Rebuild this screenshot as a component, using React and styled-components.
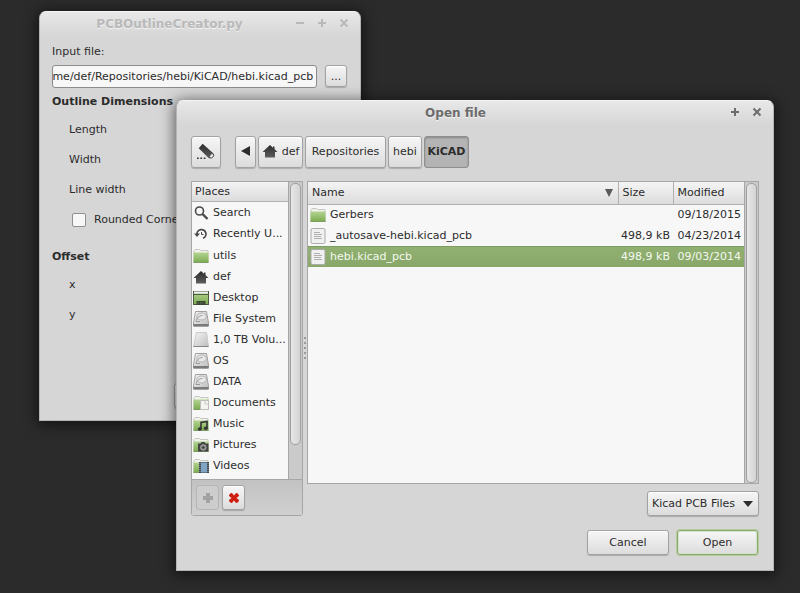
import React, { useEffect, useRef, useState } from 'react';
import styled, { createGlobalStyle, css } from 'styled-components';

const GlobalStyle = createGlobalStyle`
  * {
    box-sizing: border-box;
  }

  body {
    margin: 0;
    background: #2b2b2b;
    color: #2c2c2c;
    font-family: "DejaVu Sans", sans-serif;
    font-size: 11px;
    line-height: 15px;
  }

  button, input, select {
    font: inherit;
    color: inherit;
    margin: 0;
  }

  svg {
    flex: none;
  }
`;

const Desktop = styled.main`
  position: relative;
  min-height: 100vh;
  overflow: hidden;
`;

const Window = styled.section`
  position: absolute;
  display: flex;
  flex-direction: column;
  background: #d6d6d6;
  border: 1px solid #b4b4b4;
  border-top-color: #f4f4f4;
  border-radius: 7px 7px 0 0;
  box-shadow: 0 2px 14px 2px rgba(0, 0, 0, 0.55);
`;

const ScriptWindow = styled(Window)`
  left: 39px;
  top: 11px;
  width: 322px;
  min-height: 410px;
`;

const DialogWindow = styled(Window)`
  left: 176px;
  top: 100px;
  width: 598px;
`;

const TitleBar = styled.header`
  display: flex;
  align-items: center;
  height: 24px;
  padding-right: 9px;
  gap: 8px;
  border-radius: 6px 6px 0 0;
  background: linear-gradient(#e8e8e8, #d6d6d6);
  color: ${(p) => (p.$active ? '#6c6c6c' : '#b9b9b9')};
`;

const Title = styled.h1`
  flex: 1;
  margin: 0;
  padding-left: 14px;
  font-size: 12px;
  font-weight: bold;
  text-align: center;
  text-shadow: 0 1px 0 #f2f2f2;
`;

const WindowButton = styled.button`
  display: flex;
  align-items: center;
  justify-content: center;
  width: 14px;
  height: 14px;
  padding: 0;
  border: 0;
  background: none;
`;

const raised = css`
  border: 1px solid #a2a2a2;
  border-radius: 3px;
  background: linear-gradient(#f6f6f6, #dcdcdc);
  box-shadow: inset 0 1px 0 #fff, 0 1px 1px rgba(0, 0, 0, 0.2);
`;

const Button = styled.button`
  ${raised}
  display: flex;
  align-items: center;
  justify-content: center;
  height: 25px;
  padding: 0;
  width: ${(p) => p.$width};

  &:disabled {
    background: #cdcdcd;
    border-color: #b5b5b5;
    box-shadow: none;
  }
`;

const DefaultButton = styled(Button)`
  border-color: #8ba870;
  box-shadow: 0 0 0 1px #b4cd9b, inset 0 0 0 1px #d5e3c8;
`;

const Form = styled.form`
  display: flex;
  flex: 1;
  flex-direction: column;
  padding: 8px 13px 12px 12px;
`;

const FileRow = styled.div`
  display: flex;
  gap: 8px;
  margin-top: 6px;
`;

const PathInput = styled.input`
  flex: 1;
  min-width: 0;
  height: 23px;
  padding: 0 3px 0 0;
  border: 1px solid #8c8c8c;
  border-radius: 3px;
  background: #f7f7f7;
`;

const BrowseButton = styled(Button)`
  height: 22px;
`;

const Group = styled.fieldset`
  display: flex;
  flex-direction: column;
  gap: 15px;
  min-width: 0;
  margin: 0 0 16px;
  padding: 0 0 0 17px;
  border: 0;
`;

const GroupTitle = styled.legend`
  margin-left: -17px;
  padding: 6px 0 13px;
  font-weight: bold;
`;

const CheckLabel = styled.label`
  display: flex;
  align-items: center;
  gap: 8px;
  padding-left: 3px;
`;

const Check = styled.input`
  appearance: none;
  width: 14px;
  height: 14px;
  border: 1px solid #8f8f8f;
  border-radius: 2px;
  background: #f7f7f7;
`;

const FormActions = styled.div`
  display: flex;
  justify-content: flex-end;
  margin-top: auto;
`;

const DialogBody = styled.div`
  display: flex;
  flex-direction: column;
  padding: 11px 14px 15px;
`;

const PathBar = styled.nav`
  display: flex;
  gap: 2px;
  margin-bottom: 13px;
`;

const PathButton = styled(Button)`
  height: 32px;
  gap: 4px;
  padding: 0 0 2px;

  ${(p) => p.$current && css`
    background: #b4b4b4;
    border-color: #8e8e8e;
    box-shadow: inset 0 1px 2px rgba(0, 0, 0, 0.25);
    font-weight: bold;
  `}
`;

const TypeNameButton = styled(PathButton)`
  margin-right: 12px;
`;

const Panes = styled.div`
  display: flex;
`;

const Sidebar = styled.aside`
  display: flex;
  flex-direction: column;
  width: 112px;
  height: 335px;
  border: 1px solid #a6a6a6;
  border-radius: 0 0 3px 3px;
`;

const ScrollArea = styled.div`
  display: flex;
  flex: 1;
  min-height: 0;
  background: #f7f7f7;
`;

const Pane = styled.div`
  flex: 1;
  min-width: 0;
  overflow: hidden;
`;

const Track = styled.div`
  display: flex;
  width: 14px;
  padding: 1px 1px 0;
  border-left: 1px solid #a6a6a6;
  background: #cacaca;
`;

const Thumb = styled.div`
  flex: 1;
  height: ${(p) => p.$size};
  border: 1px solid #a0a0a0;
  border-radius: 5px;
  background: linear-gradient(90deg, #e6e6e6, #d4d4d4);
`;

const PlacesTitle = styled.h2`
  height: 20px;
  margin: 0;
  padding: 2px 3px;
  border-bottom: 1px solid #b0b0b0;
  background: linear-gradient(#f4f4f4, #dcdcdc);
  font-size: 11px;
  font-weight: normal;
`;

const PlaceList = styled.ul`
  margin: 0;
  padding: 0;
  list-style: none;

  &:first-of-type {
    margin-bottom: 1px;
  }
`;

const Place = styled.button`
  display: flex;
  align-items: center;
  gap: 4px;
  width: 100%;
  height: 21px;
  padding: 0 0 0 1px;
  border: 0;
  background: none;
  text-align: left;
  white-space: nowrap;
`;

const PlaceActions = styled.div`
  display: flex;
  gap: 3px;
  height: 36px;
  padding: 5px 4px;
  border-top: 1px solid #a6a6a6;
  background: linear-gradient(#c2c2c2, #d0d0d0);
`;

const Handle = styled.div`
  display: flex;
  align-items: center;
  justify-content: center;
  width: 4px;
`;

const FileArea = styled(ScrollArea)`
  height: 303px;
  border: 1px solid #a6a6a6;
`;

const FileTable = styled.table`
  width: 100%;
  table-layout: fixed;
  border-collapse: collapse;
`;

const Column = styled.col`
  width: ${(p) => p.$width};
`;

const HeadCell = styled.th`
  height: 22px;
  padding: 0 4px;
  border-bottom: 1px solid #b0b0b0;
  background: linear-gradient(#f4f4f4, #dcdcdc);
  font-weight: normal;
  text-align: left;

  & + & {
    border-left: 1px solid #b0b0b0;
  }
`;

const HeadContent = styled.span`
  display: flex;
  align-items: center;
  justify-content: space-between;
`;

const FileLine = styled.tr`
  height: 21px;

  ${(p) => p.$selected && css`
    background: linear-gradient(#91b171, #88a769);
    color: #f4f8ef;
    box-shadow: inset 0 1px 0 #7f9c63;
  `}
`;

const Cell = styled.td`
  padding: 0 3px 0 2px;
  text-align: ${(p) => (p.$number ? 'right' : 'left')};
  white-space: nowrap;
`;

const FileName = styled.span`
  display: flex;
  align-items: center;
  gap: 4px;
`;

const FilterRow = styled.div`
  display: flex;
  justify-content: flex-end;
  margin-top: -25px;
`;

const SelectBox = styled.label`
  ${raised}
  display: flex;
  align-items: center;
  width: 112px;
  height: 25px;
  padding-right: 5px;
`;

const Select = styled.select`
  appearance: none;
  flex: 1;
  min-width: 0;
  padding: 0 0 0 4px;
  border: 0;
  background: none;
`;

const DialogActions = styled.footer`
  display: flex;
  justify-content: flex-end;
  gap: 8px;
  padding: 14px 1px 0 0;
`;

const glyphs = {
  minimize: 'M2 5h8',
  maximize: 'M2 5h8M6 1v8',
  close: 'M2.500 1.500l7 7M9.500 1.500l-7 7',
};

const ControlGlyph = ({ kind }) => (
  <svg width="12" height="12" viewBox="0 0 12 12" fill="none" stroke="currentColor" strokeWidth="2">
    <path d={glyphs[kind]} />
  </svg>
);

const Triangle = ({ d, color = '#2c2c2c' }) => (
  <svg width="10" height="10" viewBox="0 0 10 10">
    <path d={d} fill={color} />
  </svg>
);

const Gradients = () => (
  <svg width="0" height="0" display="block" aria-hidden="true">
    <defs>
      <linearGradient id="folder" x1="0" y1="0" x2="0" y2="1">
        <stop offset="0" stopColor="#b3d492" />
        <stop offset="1" stopColor="#7cab50" />
      </linearGradient>
      <linearGradient id="metal" x1="0" y1="0" x2="1" y2="1">
        <stop offset="0" stopColor="#f6f6f6" />
        <stop offset="1" stopColor="#bdbdbd" />
      </linearGradient>
      <linearGradient id="roof" x1="0" y1="0" x2="0" y2="1">
        <stop offset="0" stopColor="#2c2c2c" />
        <stop offset="1" stopColor="#5c5c5c" />
      </linearGradient>
    </defs>
  </svg>
);

const Folder = ({ children }) => (
  <>
    <path d="M1 14.500V2.500L2 1.500h4.500l1 1H15v12z" fill="#f1f1ec" stroke="#c4c8bf" />
    <rect x="0.500" y="4.500" width="15" height="10" fill="url(#folder)" />
    <path d="M0.500 14.500h15" stroke="#7d9c62" />
    {children}
  </>
);

const iconShapes = {
  home: <path d="M8 2L0.500 9H3v5.500h10V9h2.500L12.500 6V3.500h-1.500v1.200z" fill="url(#roof)" />,
  search: (
    <>
      <circle cx="6.500" cy="6" r="4" fill="none" stroke="#4a4a4a" strokeWidth="1.600" />
      <path d="M9.500 9l5 5" stroke="#4a4a4a" strokeWidth="2.400" />
    </>
  ),
  recent: (
    <>
      <path d="M4 8.500A4.500 4.500 0 1 1 10 12.300" fill="none" stroke="#4a4a4a" strokeWidth="1.700" />
      <path d="M1 7.500h6l-3 3.500z" fill="#4a4a4a" />
      <path d="M8.500 6V8.500h2" fill="none" stroke="#4a4a4a" />
    </>
  ),
  folder: <Folder />,
  desktop: (
    <>
      <rect x="0.500" y="1.500" width="15" height="13" fill="url(#folder)" stroke="#4d5a42" />
      <path d="M1 2.500h14" stroke="#f0f0f0" strokeWidth="2" />
      <path d="M1 4.500h14" stroke="#4d5a42" />
      <path d="M3.500 11h9v4h-9z" fill="#3c4634" />
      <path d="M5 13h6" stroke="#71815f" strokeDasharray="1 1" />
    </>
  ),
  drive: (
    <>
      <path d="M2.500 0.500h11l2 11.500v3H0.500v-3z" fill="url(#metal)" stroke="#a0a0a0" />
      <ellipse cx="8.500" cy="5.500" rx="4.800" ry="3.500" fill="#e9e9e9" stroke="#b0b0b0" />
      <path d="M9.500 4.500C6 4.500 3.500 7 3 10.500h4" fill="none" stroke="#999" />
      <path d="M0.500 13h15v2.500h-15z" fill="#7b7b7b" />
    </>
  ),
  volume: (
    <>
      <path d="M3.500 0.500h10l2 14H0.500z" fill="url(#metal)" stroke="#c9c9c9" />
      <path d="M0.500 14.500h15" stroke="#858585" />
    </>
  ),
  documents: (
    <Folder>
      <path d="M7.500 5.500h8v9h-8z" fill="#f4f4f1" stroke="#bdbdb9" />
      <path d="M12 6v3h3" fill="none" stroke="#c9c9c4" />
    </Folder>
  ),
  music: (
    <Folder>
      <path d="M8 13V6.500l6-1V12" fill="none" stroke="#333" strokeWidth="1.600" />
      <ellipse cx="6.800" cy="13" rx="2" ry="1.700" fill="#333" />
      <ellipse cx="12.800" cy="12.300" rx="2" ry="1.700" fill="#333" />
    </Folder>
  ),
  pictures: (
    <Folder>
      <path d="M5 6.500h2.500l1-1.500h3l1 1.500H15.500v8H5z" fill="#454545" />
      <circle cx="10.300" cy="10.500" r="2.700" fill="#777" stroke="#b5b5b5" />
      <circle cx="10.300" cy="10.500" r="1.100" fill="#333" />
    </Folder>
  ),
  videos: (
    <Folder>
      <rect x="6" y="4" width="10" height="11" fill="#3f4a55" />
      <rect x="8" y="4.500" width="6" height="10" fill="#7fa4c4" />
      <path d="M7 5v10M15 5v10" stroke="#9aa5ad" strokeDasharray="1 1" />
    </Folder>
  ),
  file: (
    <>
      <rect x="1" y="0.500" width="14" height="15" rx="1.500" fill="#f0f0f0" stroke="#ababab" />
      <path d="M4 4.500h6M4 6.500h8M4 8.500h7M4 10.500h8" stroke="#b0b0b0" />
    </>
  ),
  pencil: (
    <>
      <path d="M5 1.500L14.500 10v3L12 14.500h-1.500L1.500 5.500z" fill="url(#roof)" />
      <ellipse cx="13" cy="12.300" rx="1.500" ry="2.200" transform="rotate(42 13 12.300)" fill="#efefef" stroke="#444" strokeWidth="0.800" />
      <path d="M0 14.500h1.500M3 14.500h1.500M6 14.500h1.500" stroke="#333" strokeWidth="1.300" />
    </>
  ),
  add: <path d="M6 3h4v3h3v4h-3v3H6v-3H3V6h3z" fill="#a2a2a2" />,
  remove: (
    <path d="M3 5l2-2h1l2 2.500L10 3h1l2 2v1l-2.500 2L13 10v1l-2 2h-1l-2-2.500L6 13H5l-2-2v-1l2.500-2L3 6z" fill="#cf1f12" />
  ),
};

const Icon = ({ name, size = 16 }) => (
  <svg width={size} height={size} viewBox="0 0 16 16" aria-hidden="true">
    {iconShapes[name]}
  </svg>
);

const placeGroups = [
  [
    ['search', 'Search'],
    ['recent', 'Recently U...'],
  ],
  [
    ['folder', 'utils'],
    ['home', 'def'],
    ['desktop', 'Desktop'],
    ['drive', 'File System'],
    ['volume', '1,0 TB Volu...'],
    ['drive', 'OS'],
    ['drive', 'DATA'],
  ],
  [
    ['documents', 'Documents'],
    ['music', 'Music'],
    ['pictures', 'Pictures'],
    ['videos', 'Videos'],
    ['folder', ''],
  ],
];

const files = [
  { icon: 'folder', name: 'Gerbers', size: '', modified: '09/18/2015' },
  { icon: 'file', name: '_autosave-hebi.kicad_pcb', size: '498,9 kB', modified: '04/23/2014' },
  { icon: 'file', name: 'hebi.kicad_pcb', size: '498,9 kB', modified: '09/03/2014' },
];

const OutlineCreator = () => {
  const pathRef = useRef(null);

  // keep the end of a long path in view
  useEffect(() => {
    pathRef.current.scrollLeft = pathRef.current.scrollWidth;
  }, []);

  return (
    <ScriptWindow>
      <TitleBar>
        <Title>PCBOutlineCreator.py</Title>
        <WindowButton aria-label="Minimize"><ControlGlyph kind="minimize" /></WindowButton>
        <WindowButton aria-label="Maximize"><ControlGlyph kind="maximize" /></WindowButton>
        <WindowButton aria-label="Close"><ControlGlyph kind="close" /></WindowButton>
      </TitleBar>
      <Form>
        <label htmlFor="inputFile">Input file:</label>
        <FileRow>
          <PathInput id="inputFile" ref={pathRef} defaultValue="/home/def/Repositories/hebi/KiCAD/hebi.kicad_pcb" />
          <BrowseButton type="button" $width="22px">...</BrowseButton>
        </FileRow>
        <Group>
          <GroupTitle>Outline Dimensions</GroupTitle>
          <span>Length</span>
          <span>Width</span>
          <span>Line width</span>
          <CheckLabel>
            <Check type="checkbox" />
            Rounded Corne
          </CheckLabel>
        </Group>
        <Group>
          <GroupTitle>Offset</GroupTitle>
          <span>x</span>
          <span>y</span>
        </Group>
        <FormActions>
          <Button type="button" $width="173px" aria-label="Create" />
        </FormActions>
      </Form>
    </ScriptWindow>
  );
};

const Places = () => (
  <Sidebar>
    <ScrollArea>
      <Pane>
        <PlacesTitle>Places</PlacesTitle>
        {placeGroups.map((group, i) => (
          <PlaceList key={i}>
            {group.map(([icon, label]) => (
              <li key={label}>
                <Place>
                  <Icon name={icon} />
                  {label}
                </Place>
              </li>
            ))}
          </PlaceList>
        ))}
      </Pane>
      <Track><Thumb $size="262px" /></Track>
    </ScrollArea>
    <PlaceActions>
      <Button $width="23px" disabled aria-label="Add"><Icon name="add" /></Button>
      <Button $width="23px" aria-label="Remove"><Icon name="remove" /></Button>
    </PlaceActions>
  </Sidebar>
);

const FileList = () => {
  const [selected, setSelected] = useState('hebi.kicad_pcb');

  return (
    <FileArea>
      <Pane>
        <FileTable>
          <colgroup>
            <Column />
            <Column $width="55px" />
            <Column $width="71px" />
          </colgroup>
          <thead>
            <tr>
              <HeadCell>
                <HeadContent>
                  Name
                  <Triangle d="M1 1h8L5 9z" color="#5a5a5a" />
                </HeadContent>
              </HeadCell>
              <HeadCell>Size</HeadCell>
              <HeadCell>Modified</HeadCell>
            </tr>
          </thead>
          <tbody>
            {files.map((file) => (
              <FileLine key={file.name} $selected={file.name === selected} onClick={() => setSelected(file.name)}>
                <Cell>
                  <FileName>
                    <Icon name={file.icon} />
                    {file.name}
                  </FileName>
                </Cell>
                <Cell $number>{file.size}</Cell>
                <Cell $number>{file.modified}</Cell>
              </FileLine>
            ))}
          </tbody>
        </FileTable>
      </Pane>
      <Track><Thumb $size="100%" /></Track>
    </FileArea>
  );
};

const OpenDialog = () => (
  <DialogWindow role="dialog">
    <TitleBar $active>
      <Title>Open file</Title>
      <WindowButton aria-label="Maximize"><ControlGlyph kind="maximize" /></WindowButton>
      <WindowButton aria-label="Close"><ControlGlyph kind="close" /></WindowButton>
    </TitleBar>
    <DialogBody>
      <PathBar>
        <TypeNameButton $width="30px" aria-label="Type a file name"><Icon name="pencil" size={18} /></TypeNameButton>
        <PathButton $width="21px" aria-label="Back"><Triangle d="M9 0v10L0 5z" /></PathButton>
        <PathButton $width="45px"><Icon name="home" />def</PathButton>
        <PathButton $width="81px">Repositories</PathButton>
        <PathButton $width="34px">hebi</PathButton>
        <PathButton $width="45px" $current>KiCAD</PathButton>
      </PathBar>
      <Panes>
        <Places />
        <Handle>
          <svg width="4" height="26" viewBox="0 0 4 26">
            <path d="M2 1v25" stroke="#999" strokeWidth="2" strokeDasharray="2 3" />
          </svg>
        </Handle>
        <FileList />
      </Panes>
      <FilterRow>
        <SelectBox>
          <Select aria-label="File type">
            <option>Kicad PCB Files</option>
          </Select>
          <Triangle d="M0 2h10L5 8z" />
        </SelectBox>
      </FilterRow>
      <DialogActions>
        <Button $width="82px">Cancel</Button>
        <DefaultButton $width="81px">Open</DefaultButton>
      </DialogActions>
    </DialogBody>
  </DialogWindow>
);

const App = () => (
  <>
    <GlobalStyle />
    <Gradients />
    <Desktop>
      <OutlineCreator />
      <OpenDialog />
    </Desktop>
  </>
);

export default App;
